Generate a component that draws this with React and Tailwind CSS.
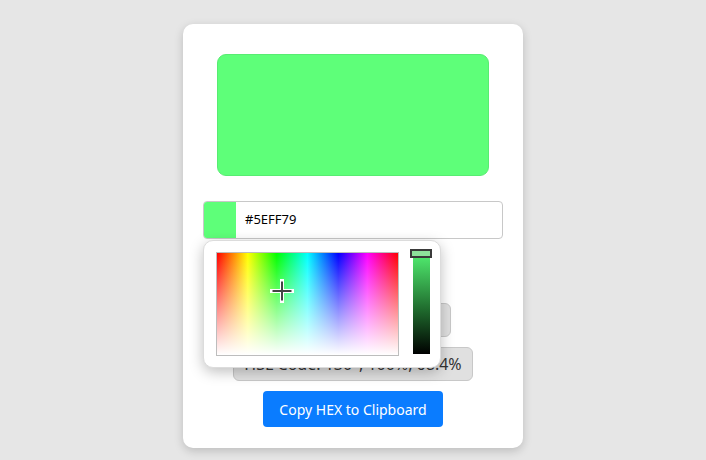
import React, { useState } from 'react'

const HEX = '#5EFF79'

const Crosshair = () => (
  <svg width="24" height="24" viewBox="0 0 24 24" className="absolute" style={{ left: 53, top: 26 }}>
    <path d="M12 2v20M2 12h20" stroke="#fff" strokeWidth="4" strokeLinecap="square" />
    <path d="M12 2.5v19M2.5 12h19" stroke="#444" strokeWidth="2" />
  </svg>
)

const ColorPopover = () => (
  <div className="absolute left-0 top-[39px] z-10 w-[238px] h-[128px] bg-white border border-[#dcdcdc] rounded-[10px] shadow-[0_4px_14px_rgba(0,0,0,0.25)] flex pl-[12px] pt-[11px] gap-[11px]">
    {/* saturation / hue area */}
    <div
      className="relative w-[183px] h-[104px] border border-[#bdbdbd]"
      style={{
        background:
          'linear-gradient(to bottom, rgba(255,255,255,0), #fff), linear-gradient(to right, #f00 0%, #ff0 17%, #0f0 33%, #0ff 50%, #00f 67%, #f0f 83%, #f00 100%)',
      }}
    >
      <Crosshair />
    </div>
    {/* brightness slider */}
    <div className="relative w-[22px] h-[106px] mt-[-3px] flex justify-center">
      <div
        className="mt-[7px] w-[17px] h-[98px]"
        style={{ background: 'linear-gradient(to bottom, #4fe86d, #1f6a2d 55%, #000)' }}
      />
      <div className="absolute top-0 left-0 w-[22px] h-[9px] border-2 border-[#3a3a3a] bg-[#8ee29b]" />
    </div>
  </div>
)

export default function App() {
  const [hex] = useState(HEX)

  return (
    <div
      className="min-h-[460px] w-full bg-[#e6e6e6] pt-[24px]"
      style={{ fontFamily: '"Noto Sans", "Open Sans", sans-serif' }}
    >
      <div className="mx-auto w-[340px] bg-white rounded-[10px] shadow-[0_3px_10px_rgba(0,0,0,0.18)] pt-[30px] px-5 pb-[21px] flex flex-col items-center">
        <div className="w-[272px] h-[122px] rounded-[9px] border border-[#58ec72]" style={{ background: hex }} />

        <div className="relative mt-[25px] w-full">
          <div className="flex h-[38px] w-full border border-[#c8c8c8] rounded-[4px] overflow-hidden">
            <div className="w-[32px] h-full" style={{ background: hex }} />
            <div className="flex items-center pl-[9px] text-[13px] text-black">{hex}</div>
          </div>
          <ColorPopover />
        </div>

        <div className="mt-5 flex flex-col items-center gap-[10px]">
          <div className="h-[34px] px-2.5 flex items-center bg-[#e0e0e0] border border-[#c8c8c8] rounded-md text-[16px] text-[#333]">
            HEX Code: {hex}
          </div>
          <div className="h-[34px] px-2.5 flex items-center bg-[#e0e0e0] border border-[#c8c8c8] rounded-md text-[16px] text-[#333]">
            RGB Code: 94, 255, 121
          </div>
          <div className="h-[34px] px-2.5 flex items-center bg-[#e0e0e0] border border-[#c8c8c8] rounded-md text-[16px] text-[#333]">
            HSL Code: 130°, 100%, 68.4%
          </div>
        </div>

        <button className="mt-[10px] h-[36px] w-[180px] rounded-[4px] bg-[#0a7cff] text-white text-[14px]">
          Copy HEX to Clipboard
        </button>
      </div>
    </div>
  )
}
